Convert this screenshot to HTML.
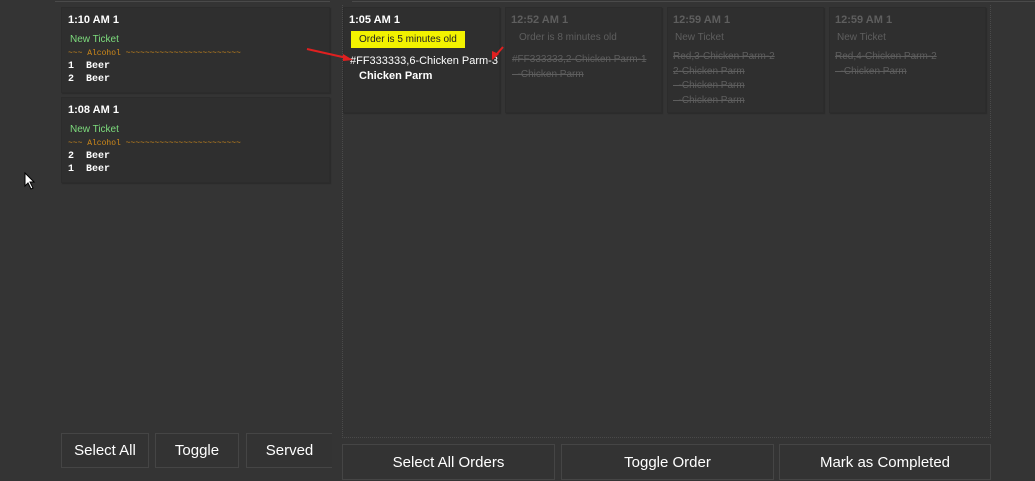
<!DOCTYPE html><html><head><style>
body{margin:0;width:1035px;height:481px;background:#343434;position:relative;overflow:hidden;font-family:"Liberation Sans",sans-serif;color:#fff}
.a{position:absolute}
.card{position:absolute;background:#2f2f2f;border:1px solid #2c2c2c;box-shadow:1px 1px 1px #2a2a2a}
.t{font-weight:bold;font-size:11px}
.g{color:#7ddc7d;font-size:10px}
.m{font-family:"Liberation Mono",monospace;font-size:10px;font-weight:bold;line-height:13px;white-space:pre}
.o{color:#d08a1a;font-size:8px;font-weight:normal;line-height:10px}
.btn{position:absolute;border:1px solid #454545;background:#333;color:#fff;font-size:15px;display:flex;align-items:center;justify-content:center;box-sizing:border-box}
.d{color:#5e5e5e;font-size:10px}
.s{text-decoration:line-through}
</style></head><body>
<div class="a" style="left:55px;top:1px;width:275px;height:1px;background:#4a4a4a"></div>
<div class="a" style="left:352px;top:1px;width:683px;height:1px;background:#4a4a4a"></div>
<div class="a" style="left:342px;top:5px;width:647px;height:432px;border:1px dotted #4a4a4a;border-top:none"></div>

<div class="card" style="left:61px;top:7px;width:267px;height:84px">
<div class="a t" style="left:6px;top:6px">1:10 AM 1</div>
<div class="a g" style="left:8px;top:26px">New Ticket</div>
<div class="a m" style="left:6px;top:39px"><span class="o">~~~ Alcohol ~~~~~~~~~~~~~~~~~~~~~~~~</span>
1  Beer
2  Beer</div></div>
<div class="card" style="left:61px;top:97px;width:267px;height:84px">
<div class="a t" style="left:6px;top:6px">1:08 AM 1</div>
<div class="a g" style="left:8px;top:26px">New Ticket</div>
<div class="a m" style="left:6px;top:39px"><span class="o">~~~ Alcohol ~~~~~~~~~~~~~~~~~~~~~~~~</span>
2  Beer
1  Beer</div></div>

<div class="card" style="left:343px;top:7px;width:155px;height:104px">
<div class="a t" style="left:5px;top:6px">1:05 AM 1</div>
<div class="a" style="left:7px;top:23px;background:#f2f200;color:#222;font-size:10px;padding:3px 8px">Order is 5 minutes old</div>
<div class="a" style="left:6px;top:47px;font-size:11px">#FF333333,6-Chicken Parm-3</div>
<div class="a t" style="left:15px;top:62px">Chicken Parm</div></div>
<svg class="a" style="left:305px;top:45px" width="200" height="25"><path d="M2 4 L42 13" stroke="#e02020" stroke-width="2"/><path d="M48 15 L38 9 L38 16Z" fill="#e02020"/><path d="M198 2 L191 10" stroke="#e02020" stroke-width="2"/><path d="M187 15 L187 6 L194 9Z" fill="#e02020"/></svg>

<div class="card" style="left:505px;top:7px;width:155px;height:104px">
<div class="a t" style="left:5px;top:6px;color:#5e5e5e">12:52 AM 1</div>
<div class="a d" style="left:13px;top:24px">Order is 8 minutes old</div>
<div class="a d s" style="left:6px;top:44px;line-height:15px">#FF333333,2-Chicken Parm-1<br>&nbsp;&nbsp;-Chicken Parm</div></div>
<div class="card" style="left:667px;top:7px;width:155px;height:104px">
<div class="a t" style="left:5px;top:6px;color:#5e5e5e">12:59 AM 1</div>
<div class="a d" style="left:7px;top:24px">New Ticket</div>
<div class="a d s" style="left:5px;top:42px;line-height:14.5px">Red,3-Chicken Parm-2<br>2-Chicken Parm<br>&nbsp;&nbsp;-Chicken Parm<br>&nbsp;&nbsp;-Chicken Parm</div></div>
<div class="card" style="left:829px;top:7px;width:155px;height:104px">
<div class="a t" style="left:5px;top:6px;color:#5e5e5e">12:59 AM 1</div>
<div class="a d" style="left:7px;top:24px">New Ticket</div>
<div class="a d s" style="left:5px;top:42px;line-height:14.5px">Red,4-Chicken Parm-2<br>&nbsp;&nbsp;-Chicken Parm</div></div>

<svg class="a" style="left:24px;top:172px" width="12" height="18"><path d="M1 1 L1 14 L4 11 L7 17 L9 16 L6 10 L10 10Z" fill="#fff" stroke="#000" stroke-width="1"/></svg>

<div class="btn" style="left:61px;top:433px;width:88px;height:35px">Select All</div>
<div class="btn" style="left:155px;top:433px;width:84px;height:35px">Toggle</div>
<div class="btn" style="left:246px;top:433px;width:86px;height:35px;border-right:none">Served</div>
<div class="btn" style="left:342px;top:444px;width:213px;height:36px">Select All Orders</div>
<div class="btn" style="left:561px;top:444px;width:213px;height:36px">Toggle Order</div>
<div class="btn" style="left:779px;top:444px;width:212px;height:36px">Mark as Completed</div>
</body></html>
